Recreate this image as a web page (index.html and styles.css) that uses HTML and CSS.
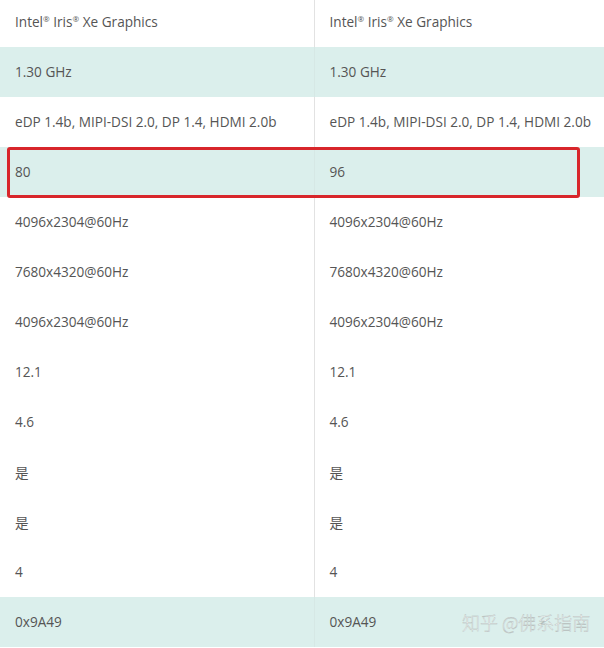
FILE: index.html
```html
<!DOCTYPE html>
<html>
<head>
<meta charset="utf-8">
<link rel="stylesheet" href="styles.css">
</head>
<body>
<div class="wrap">
  <table class="spec">
    <tr><td>Intel<sup class="r">®</sup> Iris<sup class="r">®</sup> Xe Graphics</td><td>Intel<sup class="r">®</sup> Iris<sup class="r">®</sup> Xe Graphics</td></tr>
    <tr class="hl"><td>1.30 GHz</td><td>1.30 GHz</td></tr>
    <tr><td>eDP 1.4b, MIPI-DSI 2.0, DP 1.4, HDMI 2.0b</td><td>eDP 1.4b, MIPI-DSI 2.0, DP 1.4, HDMI 2.0b</td></tr>
    <tr class="hl"><td>80</td><td>96</td></tr>
    <tr><td>4096x2304@60Hz</td><td>4096x2304@60Hz</td></tr>
    <tr><td>7680x4320@60Hz</td><td>7680x4320@60Hz</td></tr>
    <tr><td>4096x2304@60Hz</td><td>4096x2304@60Hz</td></tr>
    <tr><td>12.1</td><td>12.1</td></tr>
    <tr><td>4.6</td><td>4.6</td></tr>
    <tr><td>是</td><td>是</td></tr>
    <tr><td>是</td><td>是</td></tr>
    <tr><td>4</td><td>4</td></tr>
    <tr class="hl"><td>0x9A49</td><td>0x9A49</td></tr>
  </table>
  <div class="redbox"></div>
  <div class="watermark">知乎 @佛系指南</div>
</div>
</body>
</html>
```
FILE: styles.css
```css
html, body {
  margin: 0;
  padding: 0;
  background: #fff;
}
.wrap {
  position: relative;
  width: 604px;
  height: 648px;
  overflow: hidden;
}
.spec {
  margin-top: -3px;
  width: 604px;
  border-collapse: collapse;
  table-layout: fixed;
  font-family: "Open Sans", "Noto Sans CJK SC", sans-serif;
  font-size: 13.6px;
  color: #555;
}
.spec td {
  height: 50px;
  padding: 0 0 1px 15px;
  box-sizing: border-box;
  vertical-align: middle;
  white-space: nowrap;
}
.spec td:first-child {
  width: 314px;
  border-right: 1px solid #e2e2e2;
}
.spec tr.hl td {
  background: #dbefec;
  border-right-color: #d6e8e5;
}
.r {
  font-size: 8px;
  vertical-align: 5px;
  line-height: 0;
}
.redbox {
  position: absolute;
  left: 7px;
  top: 147px;
  width: 567px;
  height: 45px;
  border: 3px solid #d8262b;
  border-radius: 3px;
}
.watermark {
  position: absolute;
  left: 462px;
  top: 609px;
  font-family: "Noto Sans CJK SC", sans-serif;
  font-weight: 300;
  font-size: 18px;
  color: #fff;
  -webkit-text-stroke: 0.4px #b0bab8;
}
```
